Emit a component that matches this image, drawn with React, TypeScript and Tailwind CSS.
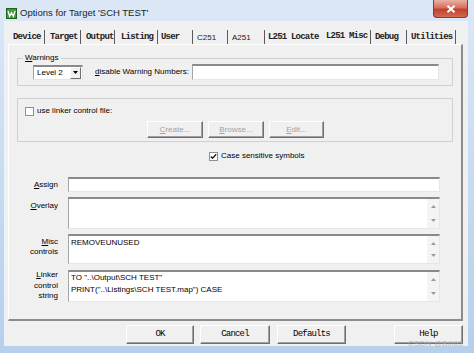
import React from "react";

const mono = "font-['Liberation_Mono',monospace] tracking-[-0.8px]";

const tabs = [
  { label: "Device", cls: "w-[31px] pl-0", sep: true, font: mono },
  { label: "Target", cls: "w-[35px] pl-[5px]", sep: true, font: mono },
  { label: "Output", cls: "w-[33px] pl-[5px]", sep: true, font: mono },
  { label: "Listing", cls: "w-[42px] pl-[6px]", sep: true, font: mono },
  { label: "User", cls: "w-[34px] pl-[3px]", sep: true, font: mono },
  { label: "C251", cls: "w-[34px] pl-[4px]", sep: true, font: "" },
  { label: "A251", cls: "w-[36px] pl-[4px]", sep: true, font: "" },
  { label: "L251 Locate", cls: "w-[55px] pl-[3px]", sep: false, font: mono },
  { label: "L251 Misc", cls: "w-[50px] pl-[6px] -mt-[1px]", sep: true, font: mono },
  { label: "Debug", cls: "w-[35px] pl-[4px]", sep: true, font: mono },
  { label: "Utilities", cls: "w-[48px] pl-[4px]", sep: true, font: mono },
];

function Sep() {
  return <div className="w-[1px] h-[14px] mt-[8px] bg-[#5a5a5a] shrink-0" />;
}

function U({ c, rest }: { c: string; rest: string }) {
  return (
    <>
      <span className="underline underline-offset-1">{c}</span>
      {rest}
    </>
  );
}

function Btn({ children, cls, disabled }: { children: React.ReactNode; cls: string; disabled?: boolean }) {
  return (
    <div
      className={`${cls} flex items-center justify-center bg-[#f0f0f0] border border-t-white border-l-white border-b-[#6e6e6e] border-r-[#6e6e6e] shadow-[inset_-1px_-1px_0_#a0a0a0] ${
        disabled ? "text-[#a3a3a3]" : "text-black"
      }`}
    >
      {children}
    </div>
  );
}

function Check({ checked }: { checked?: boolean }) {
  return (
    <div className="w-[9px] h-[9px] bg-white border border-[#8e8f8f] flex items-center justify-center shrink-0">
      {checked && (
        <svg width="7" height="7" viewBox="0 0 7 7">
          <path d="M0.8 3.4 L2.6 5.3 L6.2 1.2" stroke="#222" strokeWidth="1.4" fill="none" />
        </svg>
      )}
    </div>
  );
}

function Scroll() {
  return (
    <div className="w-[12px] h-full bg-[#f4f4f4] flex flex-col justify-between items-center py-[6px] shrink-0">
      <svg width="5" height="3" viewBox="0 0 5 3">
        <path d="M0 3 L2.5 0 L5 3 Z" fill="#9a9a9a" />
      </svg>
      <svg width="5" height="3" viewBox="0 0 5 3">
        <path d="M0 0 L2.5 3 L5 0 Z" fill="#9a9a9a" />
      </svg>
    </div>
  );
}

const field = "bg-white border-t-2 border-l border-t-[#8a8a8a] border-l-[#a5a5a5] border-b border-r border-b-[#e6e6e6] border-r-[#e6e6e6]";

export default function App() {
  return (
    <div className="w-[474px] h-[353px] relative flex flex-col overflow-hidden bg-[linear-gradient(180deg,#dce8f6_0%,#cddff2_35%,#b6cfeb_100%)] font-['Liberation_Sans',Arial,sans-serif] text-[8px] text-black">
      {/* Title bar */}
      <div className="h-[21px] flex items-start shrink-0">
        <svg className="mt-[8px] ml-[6px]" width="11" height="11" viewBox="0 0 11 11">
          <rect x="0.5" y="0.5" width="10" height="10" fill="#3f9a3a" stroke="#23601f" />
          <path d="M2 3 L3.6 8.2 L5.5 4.6 L7.4 8.2 L9 3" stroke="#fff" strokeWidth="1.3" fill="none" />
        </svg>
        <span className="ml-[3px] mt-[7px] text-[9.5px] leading-[12px] text-[#1e1e1e]">Options for Target 'SCH TEST'</span>
        <div className="ml-auto mr-[6px] w-[35px] h-[18px] rounded-b-[4px] border border-t-0 border-[#8a3a30] bg-[linear-gradient(180deg,#eab1a5_0%,#d8705f_45%,#c2412e_55%,#d06a50_100%)] flex items-center justify-center">
          <svg width="10" height="8" viewBox="0 0 10 8">
            <path d="M1.5 0.8 L8.5 7.2 M8.5 0.8 L1.5 7.2" stroke="#fff" strokeWidth="2" />
          </svg>
        </div>
      </div>

      {/* Client area */}
      <div className="flex-1 ml-[4px] mr-[6px] mb-[7px] bg-[#f0f0f0] flex flex-col border-l border-t border-[#eaf2fb]">
        {/* Tabs */}
        <div className="h-[22px] flex pl-[8px] shrink-0">
          {tabs.map((t) => (
            <React.Fragment key={t.label}>
              <div className={`${t.cls} ${t.font} shrink-0 pt-[10px] text-[9px] leading-[10px] font-bold whitespace-nowrap text-[#222]`}>
                {t.font ? t.label : <span className="font-normal text-[8px]">{t.label}</span>}
              </div>
              {t.sep && <Sep />}
            </React.Fragment>
          ))}
        </div>

        {/* Panel */}
        <div className="ml-[3px] w-[455px] h-[277px] shrink-0 flex flex-col border-t border-l border-t-white border-l-white border-r-2 border-b-2 border-r-[#8c8c8c] border-b-[#8c8c8c]">
          {/* Warnings */}
          <div className="relative mt-[13px] ml-[8px] w-[436px] h-[28px] border border-[#d0d0d0] flex items-center pl-[15px] shrink-0">
            <span className="absolute -top-[6px] left-[5px] px-[2px] bg-[#f0f0f0] leading-[10px]">
              <U c="W" rest="arnings" />
            </span>
            <div className={`${field} w-[50px] h-[15px] flex items-center`}>
              <span className="pl-[3px] flex-1">Level 2</span>
              <div className="w-[11px] h-[12px] mr-[1px] bg-[#f0f0f0] border border-t-white border-l-white border-b-[#6e6e6e] border-r-[#6e6e6e] flex items-center justify-center">
                <svg width="5" height="3" viewBox="0 0 5 3">
                  <path d="M0 0 L2.5 3 L5 0 Z" fill="#000" />
                </svg>
              </div>
            </div>
            <span className="ml-[12px] w-[93px] whitespace-nowrap">
              <U c="d" rest="isable Warning Numbers:" />
            </span>
            <div className={`${field} ml-[4px] w-[247px] h-[16px]`} />
          </div>

          {/* Linker control file */}
          <div className="mt-[12px] ml-[8px] w-[436px] h-[44px] border border-[#d0d0d0] flex flex-col shrink-0">
            <div className="mt-[7px] ml-[7px] flex items-center gap-[3px] leading-[10px]">
              <Check />
              <span>use linker control file:</span>
            </div>
            <div className="mt-[5px] ml-[129px] flex gap-[5px]">
              <Btn cls="w-[56px] h-[17px]" disabled>
                <U c="C" rest="reate..." />
              </Btn>
              <Btn cls="w-[56px] h-[17px]" disabled>
                <U c="B" rest="rowse..." />
              </Btn>
              <Btn cls="w-[55px] h-[17px]" disabled>
                <U c="E" rest="dit..." />
              </Btn>
            </div>
          </div>

          {/* Case sensitive */}
          <div className="mt-[9px] ml-[200px] flex items-center gap-[3px] leading-[10px] shrink-0">
            <Check checked />
            <span>Case sensitive symbols</span>
          </div>

          {/* Assign */}
          <div className="mt-[16px] flex items-center shrink-0">
            <span className="w-[49px] text-right leading-[10px]">
              <U c="A" rest="ssign" />
            </span>
            <div className={`${field} ml-[10px] w-[372px] h-[15px]`} />
          </div>

          {/* Overlay */}
          <div className="mt-[5px] flex shrink-0">
            <span className="w-[49px] text-right leading-[10px] pt-[4px]">
              <U c="O" rest="verlay" />
            </span>
            <div className={`${field} ml-[10px] w-[372px] h-[32px] flex`}>
              <div className="flex-1" />
              <Scroll />
            </div>
          </div>

          {/* Misc controls */}
          <div className="mt-[5px] flex shrink-0">
            <span className="w-[49px] text-right leading-[10px] pt-[3px]">
              <U c="M" rest="isc" />
              <br />
              controls
            </span>
            <div className={`${field} ml-[10px] w-[372px] h-[30px] flex`}>
              <div className="flex-1 pl-[2px] pt-[1px] leading-[12px]">REMOVEUNUSED</div>
              <Scroll />
            </div>
          </div>

          {/* Linker control string */}
          <div className="mt-[6px] flex shrink-0">
            <span className="w-[49px] text-right leading-[10.5px] pt-0">
              <U c="L" rest="inker" />
              <br />
              control
              <br />
              string
            </span>
            <div className={`${field} ml-[10px] w-[372px] h-[32px] flex`}>
              <div className="flex-1 pl-[2px] leading-[12px] whitespace-pre">
                {'TO "..\\Output\\SCH TEST"'}
                <br />
                {'PRINT("..\\Listings\\SCH TEST.map") CASE'}
              </div>
              <Scroll />
            </div>
          </div>
        </div>

        {/* Bottom buttons */}
        <div className={`mt-[4px] ml-[121px] flex shrink-0 text-[9px] ${mono}`}>
          <Btn cls="w-[68px] h-[19px]">OK</Btn>
          <Btn cls="w-[70px] h-[19px] ml-[6px]">Cancel</Btn>
          <Btn cls="w-[69px] h-[19px] ml-[7px]">Defaults</Btn>
          <Btn cls="w-[69px] h-[19px] ml-[48px] items-start pt-[2px]">Help</Btn>
        </div>
      </div>

      {/* watermark */}
      <span className="absolute left-[408px] top-[339px] text-[8px] leading-[9px] text-[#a9a9a9]/80 tracking-[0.2px]">CSDN @Bill65</span>
    </div>
  );
}
